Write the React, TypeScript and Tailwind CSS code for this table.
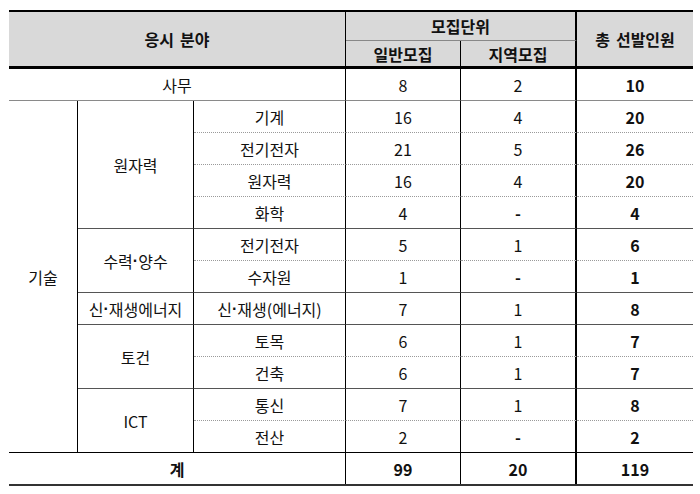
import React from "react";

type Sub = { name: React.ReactNode; a: string; b: string; t: string };
type Group = { name: React.ReactNode; span: string; subs: Sub[] };

const Dot = () => <span className="font-['Liberation_Sans',sans-serif] font-bold">·</span>;

const groups: Group[] = [
  {
    name: "원자력",
    span: "row-span-4",
    subs: [
      { name: "기계", a: "16", b: "4", t: "20" },
      { name: "전기전자", a: "21", b: "5", t: "26" },
      { name: "원자력", a: "16", b: "4", t: "20" },
      { name: "화학", a: "4", b: "-", t: "4" },
    ],
  },
  {
    name: (
      <>
        수력<Dot />양수
      </>
    ),
    span: "row-span-2",
    subs: [
      { name: "전기전자", a: "5", b: "1", t: "6" },
      { name: "수자원", a: "1", b: "-", t: "1" },
    ],
  },
  {
    name: (
      <>
        신<Dot />재생에너지
      </>
    ),
    span: "row-span-1",
    subs: [
      {
        name: (
          <>
            신<Dot />재생(에너지)
          </>
        ),
        a: "7",
        b: "1",
        t: "8",
      },
    ],
  },
  {
    name: "토건",
    span: "row-span-2",
    subs: [
      { name: "토목", a: "6", b: "1", t: "7" },
      { name: "건축", a: "6", b: "1", t: "7" },
    ],
  },
  {
    name: "ICT",
    span: "row-span-2",
    subs: [
      { name: "통신", a: "7", b: "1", t: "8" },
      { name: "전산", a: "2", b: "-", t: "2" },
    ],
  },
];

function Cell({ className = "", children }: { className?: string; children?: React.ReactNode }) {
  return <div className={"flex items-center justify-center " + className}>{children}</div>;
}

export default function App() {
  const rows: React.ReactNode[] = [];
  groups.forEach((g, gi) => {
    const lastGroup = gi === groups.length - 1;
    g.subs.forEach((s, si) => {
      const lastSub = si === g.subs.length - 1;
      let bline: string;
      if (lastSub && lastGroup) bline = "border-b border-black";
      else if (lastSub) bline = "border-b border-b-[#555]";
      else bline = "border-b border-b-[#9a9a9a] [border-bottom-style:dotted]";
      if (si === 0) {
        rows.push(
          <Cell
            key={`g${gi}`}
            className={`${g.span} border-r border-r-black border-b ${lastGroup ? "border-b-black" : "border-b-[#555]"}`}
          >
            {g.name}
          </Cell>
        );
      }
      rows.push(
        <Cell key={`s${gi}-${si}-n`} className={`${bline} border-r border-r-black`}>
          {s.name}
        </Cell>
      );
      rows.push(
        <Cell key={`s${gi}-${si}-a`} className={`${bline} border-r border-r-black`}>
          {s.a}
        </Cell>
      );
      rows.push(
        <Cell
          key={`s${gi}-${si}-b`}
          className={`${bline} border-r-2 border-r-black ${s.b === "-" ? "font-bold" : ""}`}
        >
          {s.b}
        </Cell>
      );
      rows.push(
        <Cell key={`s${gi}-${si}-t`} className={`${bline} font-bold`}>
          {s.t}
        </Cell>
      );
    });
  });

  return (
    <div className="w-[700px] h-[494px] bg-white pt-[10px] pl-[9px] font-['Noto_Sans_CJK_KR',sans-serif] text-[16px] text-[#111]">
      <div className="grid w-[684px] grid-cols-[69px_116px_152px_115px_116px_116px] grid-rows-[29px_28px_repeat(12,32px)_31px] border-t-2 border-t-black border-b-2 border-b-[#333] leading-none">
        {/* header */}
        <Cell className="col-span-3 row-span-2 gap-[6px] bg-[#d9d9d9] font-bold border-r border-r-black border-b-[3px] border-b-black">
          <span>응시</span>
          <span>분야</span>
        </Cell>
        <Cell className="col-span-2 bg-[#d9d9d9] font-bold border-r-2 border-r-black border-b border-b-[#888]">
          모집단위
        </Cell>
        <Cell className="row-span-2 gap-[6px] bg-[#d9d9d9] font-bold border-b-[3px] border-b-black">
          <span>총</span>
          <span>선발인원</span>
        </Cell>
        <Cell className="bg-[#d9d9d9] font-bold border-r border-r-black border-b-[3px] border-b-black">
          일반모집
        </Cell>
        <Cell className="bg-[#d9d9d9] font-bold border-r-2 border-r-black border-b-[3px] border-b-black">
          지역모집
        </Cell>

        {/* 사무 */}
        <Cell className="col-span-3 border-r border-r-black border-b border-b-[#8a8a8a]">사무</Cell>
        <Cell className="border-r border-r-black border-b border-b-[#8a8a8a]">8</Cell>
        <Cell className="border-r-2 border-r-black border-b border-b-[#8a8a8a]">2</Cell>
        <Cell className="font-bold border-b border-b-[#8a8a8a]">10</Cell>

        {/* 기술 */}
        <Cell className="row-span-11 border-r border-r-black border-b border-b-black">기술</Cell>
        {rows}

        {/* 계 */}
        <Cell className="col-span-3 font-bold border-r border-r-black">계</Cell>
        <Cell className="font-bold border-r border-r-black">99</Cell>
        <Cell className="font-bold border-r-2 border-r-black">20</Cell>
        <Cell className="font-bold">119</Cell>
      </div>
    </div>
  );
}
